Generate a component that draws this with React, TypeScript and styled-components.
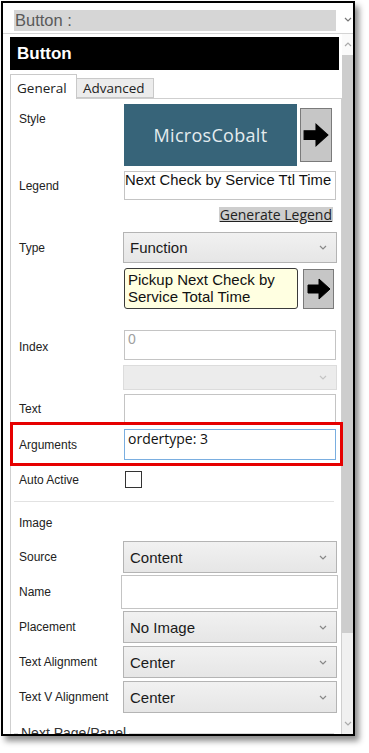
import React from "react";
import styled, { createGlobalStyle } from "styled-components";

const Global = createGlobalStyle`
  html, body { margin: 0; padding: 0; background: #ffffff; }
  body { width: 369px; height: 753px; overflow: hidden; font-family: "Liberation Sans", Arial, sans-serif; }
  * { box-sizing: border-box; }
`;

const Frame = styled.div`
  margin: 1px 0 0 1px;
  width: 354px;
  height: 735px;
  border: 2px solid #000;
  background: #fff;
  box-shadow: 4px 5px 6px rgba(0, 0, 0, 0.45);
  display: flex;
  flex-direction: column;
  overflow: hidden;
`;

const TopBar = styled.div`
  height: 31px;
  flex: none;
  display: flex;
  align-items: flex-start;
  padding: 7px 0 0 11px;
  border-bottom: 1px solid #d4d4d4;
`;

const TopSelect = styled.div`
  width: 322px;
  height: 21px;
  background: #d6d6d6;
  color: #5a5a5a;
  font-size: 16.5px;
  line-height: 21px;
  padding-left: 1px;
`;

const TopChevron = styled.div`
  margin: 7px 0 0 8px;
  display: flex;
`;

const Body = styled.div`
  flex: 1;
  min-height: 0;
  display: flex;
`;

const Content = styled.div`
  width: 339px;
  flex: none;
  display: flex;
  flex-direction: column;
`;

const Scrollbar = styled.div`
  width: 11px;
  flex: none;
  background: #f0f0f0;
  display: flex;
  flex-direction: column;
`;

const ScrollButton = styled.div<{ $h: number }>`
  height: ${(p) => p.$h}px;
  background: #fafafa;
  display: flex;
  align-items: center;
  justify-content: center;
`;

const ScrollThumb = styled.div`
  height: 578px;
  background: #cdcdcd;
`;

const ScrollTrack = styled.div`
  flex: 1;
  display: flex;
  align-items: flex-end;
  justify-content: center;
  padding-bottom: 8px;
`;

const Header = styled.div`
  margin: 3px 0 0 7px;
  width: 329px;
  height: 33px;
  background: #000;
  color: #fff;
  font-weight: bold;
  font-size: 17px;
  line-height: 33px;
  padding-left: 7px;
`;

const Tabs = styled.div`
  margin: 4px 0 0 7px;
  display: flex;
  align-items: flex-end;
  height: 24px;
  position: relative;
  z-index: 1;
`;

const Tab = styled.div<{ $active?: boolean; $w: number }>`
  width: ${(p) => p.$w}px;
  height: ${(p) => (p.$active ? 25 : 20)}px;
  margin-bottom: ${(p) => (p.$active ? -1 : 0)}px;
  background: ${(p) => (p.$active ? "#fff" : "#ececec")};
  border: 1px solid #c9c9c9;
  border-bottom: ${(p) => (p.$active ? "none" : "1px solid #c9c9c9")};
  border-left: ${(p) => (p.$active ? "1px solid #c9c9c9" : "none")};
  font-family: "Open Sans", sans-serif;
  font-size: 13.5px;
  color: #222;
  padding: ${(p) => (p.$active ? "4px 0 0 6px" : "0 0 0 6px")};
  line-height: ${(p) => (p.$active ? "18px" : "19px")};
`;

const Panel = styled.div`
  margin-left: 7px;
  width: 332px;
  border: 1px solid #cfcfcf;
  border-bottom: none;
  padding: 5px 4px 0 8px;
  display: flex;
  flex-direction: column;
`;

const Row = styled.div<{ $mt: number; $h: number; $align?: string }>`
  margin-top: ${(p) => p.$mt}px;
  height: ${(p) => p.$h}px;
  display: grid;
  grid-template-columns: 104px 1fr;
  align-items: ${(p) => p.$align || "center"};
`;

const Label = styled.div<{ $pt?: number }>`
  font-size: 12px;
  color: #222;
  padding-top: ${(p) => p.$pt || 0}px;
  white-space: nowrap;
`;

const Controls = styled.div`
  display: flex;
  align-items: center;
  height: 100%;
`;

const StylePreview = styled.div`
  margin-left: 1px;
  width: 173px;
  height: 62px;
  background: #376479;
  color: #e4ecef;
  font-family: "Open Sans", sans-serif;
  font-size: 18px;
  letter-spacing: 0.3px;
  display: flex;
  align-items: center;
  justify-content: center;
`;

const ArrowButton = styled.div<{ $w: number; $h: number; $ml: number }>`
  margin-left: ${(p) => p.$ml}px;
  width: ${(p) => p.$w}px;
  height: ${(p) => p.$h}px;
  background: #c6c6c6;
  border: 1px solid #7a7a7a;
  display: flex;
  align-items: center;
  justify-content: center;
`;

const TextBox = styled.div<{ $h: number; $ml?: number; $w?: number; $focus?: boolean; $mono?: boolean; $muted?: boolean }>`
  margin-left: ${(p) => (p.$ml === undefined ? 1 : p.$ml)}px;
  width: ${(p) => p.$w || 212}px;
  height: ${(p) => p.$h}px;
  background: #fff;
  border: 1px solid ${(p) => (p.$focus ? "#7aaee0" : "#c4c4c4")};
  font-family: ${(p) => (p.$mono ? '"Open Sans", sans-serif' : '"Liberation Sans", Arial, sans-serif')};
  font-size: ${(p) => (p.$mono ? 14 : p.$muted ? 14 : 14.8)}px;
  color: ${(p) => (p.$muted ? "#a0a0a0" : "#111")};
  padding: ${(p) => (p.$mono ? "0 0 0 3px" : p.$muted ? "0 0 0 3px" : "0 0 0 0")};
  line-height: ${(p) => (p.$mono ? "18px" : "17px")};
  white-space: nowrap;
  overflow: hidden;
`;

const Select = styled.div<{ $h: number; $disabled?: boolean }>`
  width: 214px;
  height: ${(p) => p.$h}px;
  background: ${(p) => (p.$disabled ? "#ececec" : "linear-gradient(#f1f1f1, #e6e6e6)")};
  border: 1px solid ${(p) => (p.$disabled ? "#dcdcdc" : "#b4b4b4")};
  display: flex;
  align-items: center;
  justify-content: space-between;
  padding: 0 9px 0 6px;
  font-size: 15px;
  color: #1a1a1a;
`;

const GenRow = styled.div`
  margin-top: 7px;
  height: 15px;
  display: flex;
  justify-content: flex-end;
  padding-right: 4px;
`;

const GenButton = styled.div`
  width: 114px;
  height: 15px;
  background: #cecece;
  font-family: "Open Sans", sans-serif;
  font-size: 14px;
  line-height: 15px;
  color: #222;
  text-decoration: underline;
  text-align: right;
  padding-right: 1px;
  white-space: nowrap;
`;

const FunctionBox = styled.div`
  margin-left: 1px;
  width: 174px;
  height: 41px;
  background: #ffffe1;
  border: 1px solid #3a3a3a;
  border-radius: 3px;
  font-size: 15px;
  line-height: 17px;
  color: #111;
  padding: 2px 0 0 3px;
`;

const Highlight = styled.div`
  position: relative;
  z-index: 2;
  margin: -1px -6px 0 -9px;
  height: 44px;
  border: 3px solid #e60000;
  padding: 0 4px 0 6px;
  display: grid;
  grid-template-columns: 104px 1fr;
  align-items: center;
`;

const CheckBox = styled.div`
  margin-left: 2px;
  width: 17px;
  height: 17px;
  border: 1px solid #333;
  background: #fff;
`;

const Separator = styled.div`
  margin: 13px 3px 0 -5px;
  height: 1px;
  background: #e2e2e2;
`;

const SectionLabel = styled.div`
  margin-top: 14px;
  height: 14px;
  font-size: 12px;
  line-height: 14px;
  color: #222;
`;

const Fieldset = styled.div`
  margin: 12px 3px 0 -5px;
  display: flex;
  align-items: center;
  gap: 3px;
  height: 16px;
`;

const FieldLine = styled.div<{ $grow?: boolean }>`
  height: 1px;
  background: #dadada;
  width: ${(p) => (p.$grow ? "auto" : "4px")};
  flex: ${(p) => (p.$grow ? 1 : "none")};
`;

const FieldLegend = styled.div`
  font-size: 14px;
  color: #333;
  white-space: nowrap;
`;

const Chevron = ({ color = "#888", up = false }: { color?: string; up?: boolean }) => (
  <svg width="8" height="5" viewBox="0 0 8 5">
    <path d={up ? "M1 4 L4 1 L7 4" : "M1 1 L4 4 L7 1"} fill="none" stroke={color} strokeWidth="1.2" />
  </svg>
);

const Arrow = ({ size }: { size: number }) => (
  <svg width={size} height={size} viewBox="0 0 24 24">
    <polygon points="1,8 12,8 12,2 23,12 12,22 12,16 1,16" fill="#000" stroke="#000" strokeWidth="1" strokeLinejoin="miter" />
  </svg>
);

export default function App() {
  return (
    <>
      <Global />
      <Frame>
        <TopBar>
          <TopSelect>Button :</TopSelect>
          <TopChevron>
            <Chevron color="#777" />
          </TopChevron>
        </TopBar>
        <Body>
          <Content>
            <Header>Button</Header>
            <Tabs>
              <Tab $active $w={67}>General</Tab>
              <Tab $w={77}>Advanced</Tab>
            </Tabs>
            <Panel>
              <Row $mt={0} $h={62} $align="start">
                <Label $pt={8}>Style</Label>
                <Controls>
                  <StylePreview>MicrosCobalt</StylePreview>
                  <ArrowButton $w={32} $h={54} $ml={3}>
                    <Arrow size={26} />
                  </ArrowButton>
                </Controls>
              </Row>
              <Row $mt={5} $h={29}>
                <Label>Legend</Label>
                <Controls>
                  <TextBox $h={29} style={{ alignSelf: "flex-start" }}>Next Check by Service Ttl Time</TextBox>
                </Controls>
              </Row>
              <GenRow>
                <GenButton>Generate Legend</GenButton>
              </GenRow>
              <Row $mt={10} $h={31}>
                <Label>Type</Label>
                <Controls>
                  <Select $h={31}>
                    Function
                    <Chevron />
                  </Select>
                </Controls>
              </Row>
              <Row $mt={5} $h={41}>
                <span />
                <Controls>
                  <FunctionBox>
                    Pickup Next Check by
                    <br />
                    Service Total Time
                  </FunctionBox>
                  <ArrowButton $w={31} $h={40} $ml={5}>
                    <Arrow size={24} />
                  </ArrowButton>
                </Controls>
              </Row>
              <Row $mt={21} $h={30}>
                <Label $pt={4}>Index</Label>
                <Controls>
                  <TextBox $h={30} $muted style={{ alignSelf: "flex-start" }}>0</TextBox>
                </Controls>
              </Row>
              <Row $mt={5} $h={25}>
                <span />
                <Controls>
                  <Select $h={25} $disabled>
                    <span />
                    <Chevron color="#c4c4c4" />
                  </Select>
                </Controls>
              </Row>
              <Row $mt={4} $h={29}>
                <Label>Text</Label>
                <Controls>
                  <TextBox $h={29} />
                </Controls>
              </Row>
              <Highlight>
                <Label $pt={1}>Arguments</Label>
                <Controls>
                  <TextBox $h={31} $focus $mono style={{ alignSelf: "center" }}>
                    ordertype: 3
                  </TextBox>
                </Controls>
              </Highlight>
              <Row $mt={5} $h={17}>
                <Label $pt={1}>Auto Active</Label>
                <Controls>
                  <CheckBox />
                </Controls>
              </Row>
              <Separator />
              <SectionLabel>Image</SectionLabel>
              <Row $mt={11} $h={32}>
                <Label>Source</Label>
                <Controls>
                  <Select $h={32}>
                    Content
                    <Chevron />
                  </Select>
                </Controls>
              </Row>
              <Row $mt={2} $h={34}>
                <Label>Name</Label>
                <Controls>
                  <TextBox $h={34} $ml={-2} $w={217} />
                </Controls>
              </Row>
              <Row $mt={2} $h={32}>
                <Label>Placement</Label>
                <Controls>
                  <Select $h={32}>
                    No Image
                    <Chevron />
                  </Select>
                </Controls>
              </Row>
              <Row $mt={3} $h={32}>
                <Label>Text Alignment</Label>
                <Controls>
                  <Select $h={32}>
                    Center
                    <Chevron />
                  </Select>
                </Controls>
              </Row>
              <Row $mt={3} $h={32}>
                <Label>Text V Alignment</Label>
                <Controls>
                  <Select $h={32}>
                    Center
                    <Chevron />
                  </Select>
                </Controls>
              </Row>
              <Fieldset>
                <FieldLine />
                <FieldLegend>Next Page/Panel</FieldLegend>
                <FieldLine $grow />
              </Fieldset>
            </Panel>
          </Content>
          <Scrollbar>
            <ScrollButton $h={21}>
              <Chevron color="#aaa" up />
            </ScrollButton>
            <ScrollThumb />
            <ScrollTrack>
              <Chevron color="#aaa" />
            </ScrollTrack>
          </Scrollbar>
        </Body>
      </Frame>
    </>
  );
}
